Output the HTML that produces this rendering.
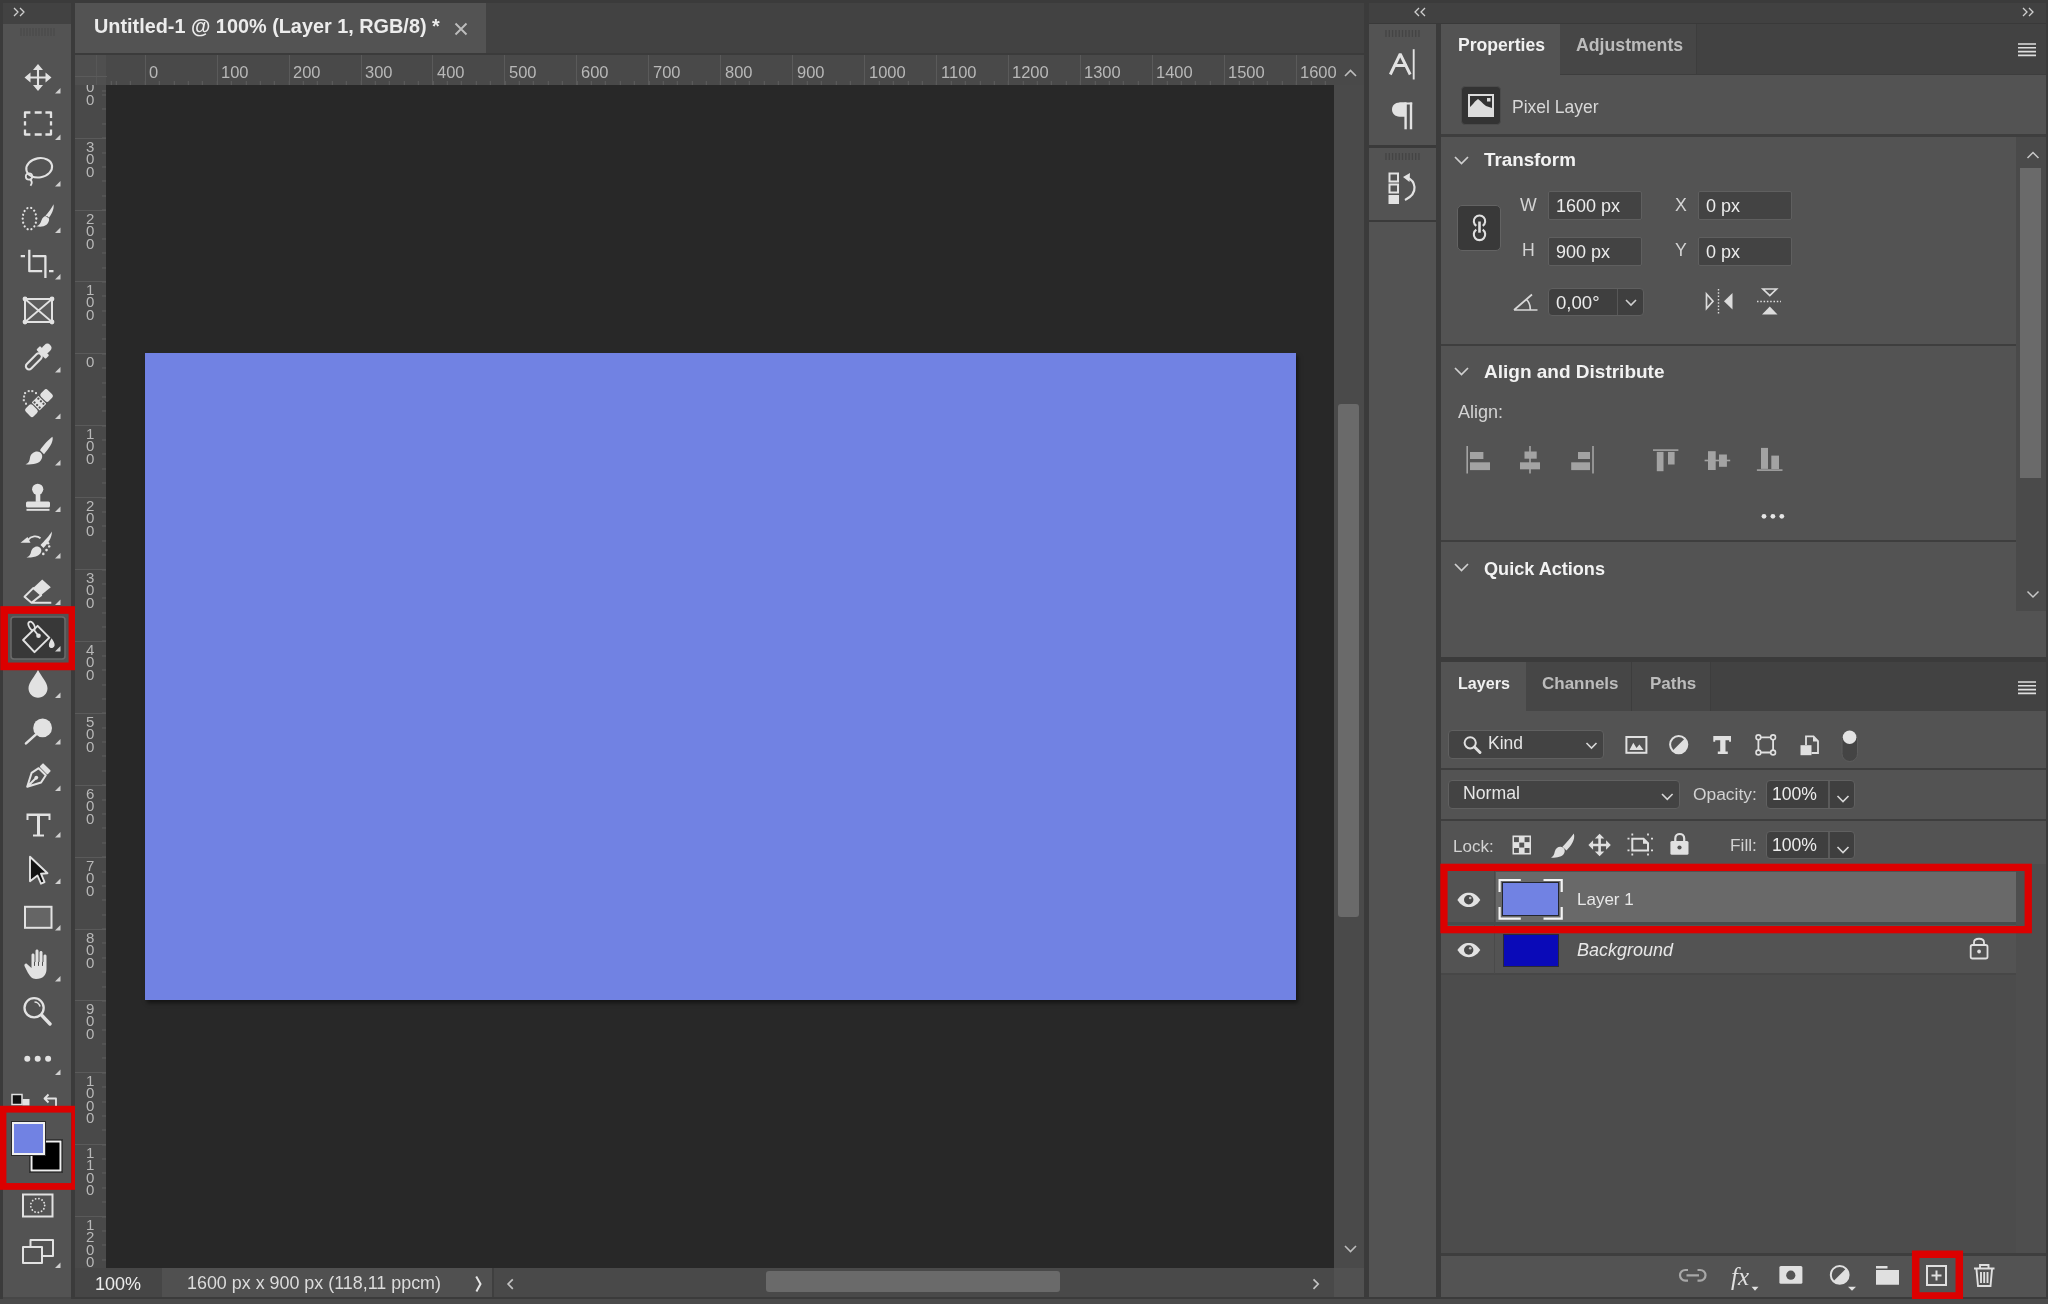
<!DOCTYPE html>
<html><head><meta charset="utf-8">
<style>
*{margin:0;padding:0;box-sizing:border-box}
html,body{width:2048px;height:1304px;overflow:hidden;background:#3b3b3b;font-family:"Liberation Sans",sans-serif;color:#e0e0e0}
.a{position:absolute}
.t{position:absolute;white-space:pre;line-height:1;will-change:transform}
svg{position:absolute;overflow:visible}
.rl{font-size:16.5px;color:#b8b8b8}
.rv{font-size:15px;line-height:12.4px;color:#b8b8b8}
</style></head><body>

<!-- ============ LEFT TOOLBAR ============ -->
<div class="a" style="left:3px;top:3px;width:68px;height:21px;background:#424242"></div>
<div class="a" style="left:3px;top:24px;width:68px;height:1273px;background:#535353"></div>
<div class="a" style="left:3px;top:1297px;width:68px;height:7px;background:#474747"></div>
<!--TOOLBAR-->
<svg class="a" style="left:0;top:0" width="76" height="1304" viewBox="0 0 76 1304">
<defs><style>.ic{fill:none;stroke:#e2e2e2;stroke-width:2.1;stroke-linecap:butt;stroke-linejoin:round}.fl{fill:#e2e2e2}.tri{fill:#d0d0d0}</style></defs>
<!-- header >> -->
<path class="ic" style="stroke-width:1.3;stroke:#cfcfcf" d="M14 8 L18 12 L14 16 M20 8 L24 12 L20 16"/>
<!-- grip -->
<g stroke="#4a4a4a" stroke-width="1.2"><path d="M21 28V36M24 28V36M27 28V36M30 28V36M33 28V36M36 28V36M39 28V36M42 28V36M45 28V36M48 28V36M51 28V36M54 28V36"/></g>
<!-- move -->
<g transform="translate(38,77.5)"><path class="fl" d="M0 -13.5 L5 -7.5 L-5 -7.5Z M0 13.5 L5 7.5 L-5 7.5Z M-13.5 0 L-7.5 -5 L-7.5 5Z M13.5 0 L7.5 -5 L7.5 5Z"/><path class="ic" d="M0 -9V9M-9 0H9"/></g>
<!-- marquee -->
<g transform="translate(38,123.5)"><path class="ic" style="stroke-width:2.3" d="M-13 -5.5V-11H-7.6M-3.3 -11H3.7M7.4 -11H13V-5.5M13 -2.3V2M13 6V11H7.4M3.7 11H-3.3M-7.6 11H-13V6M-13 2V-2.3"/></g>
<!-- lasso -->
<g transform="translate(38,170.7)"><ellipse class="ic" cx="1.2" cy="-2.9" rx="13" ry="9.6" transform="rotate(-10 1.2 -2.9)"/><circle class="ic" style="stroke-width:1.8" cx="-9" cy="5.8" r="3.2"/><path class="ic" style="stroke-width:1.8" d="M-8 8.5C-5 11 -6 13 -7.5 15"/></g>
<!-- quick select -->
<g transform="translate(38,217.3)"><ellipse cx="-8.5" cy="1.3" rx="6.8" ry="11" fill="none" stroke="#e2e2e2" stroke-width="2.2" stroke-linecap="round" stroke-dasharray="0.1 3.9"/><path class="fl" d="M15.5 -13C14 -9.5 10.5 -5 7.5 -1.5L10.5 1C13 -2 16.5 -8 15.5 -13Z M-1.7 9C1 8.5 2.5 6 3.5 3C4.5 0 7 -2 9.5 -1C12 0.5 11.5 5 8.5 7.5C6 9.5 2 9.8 -1.7 9Z"/></g>
<!-- crop -->
<g transform="translate(38,263.9)"><path class="ic" style="stroke-width:2.3" d="M-8.7 -14.2V7.3H4.2M11 7.3H15.5M-17.3 -7.7H-13M-5.5 -7.7H7.4V14.1"/></g>
<!-- frame -->
<g transform="translate(38,310.5)"><rect x="-13" y="-11.5" width="27" height="23" fill="rgba(255,255,255,0.06)" stroke="#e2e2e2" stroke-width="2"/><path class="ic" style="stroke-width:1.8" d="M-13 -11.5L14 11.5M14 -11.5L-13 11.5"/><g class="fl"><circle cx="-13" cy="-11.5" r="2.4"/><circle cx="14" cy="-11.5" r="2.4"/><circle cx="-13" cy="11.5" r="2.4"/><circle cx="14" cy="11.5" r="2.4"/></g></g>
<!-- eyedropper -->
<g transform="translate(35.7,359.5) rotate(45) scale(1.05)"><rect class="fl" x="-3.8" y="-19.5" width="7.6" height="10" rx="3.8"/><rect class="fl" x="-6.2" y="-12" width="12.4" height="5" rx="1"/><rect class="ic" style="stroke-width:2" x="-3" y="-7" width="6" height="19" rx="3"/></g>
<!-- healing -->
<g transform="translate(39,403.1) rotate(-45)"><g class="fl"><rect x="-15.5" y="-5.6" width="9.6" height="11.2" rx="2.5"/><rect x="-4.7" y="-5.6" width="9.4" height="11.2" rx="0.6"/><rect x="5.9" y="-5.6" width="9.6" height="11.2" rx="2.5"/></g><g fill="#535353"><circle cx="-2.7" cy="-3.6" r="1.15"/><circle cx="-2.7" cy="0" r="1.15"/><circle cx="-2.7" cy="3.6" r="1.15"/><circle cx="2.7" cy="-3.6" r="1.15"/><circle cx="2.7" cy="0" r="1.15"/><circle cx="2.7" cy="3.6" r="1.15"/></g></g>
<g transform="translate(38,403.7)" fill="#d6d6d6"><rect x="-13.9" y="-11.6" width="2" height="2"/><rect x="-10.3" y="-13.6" width="2" height="2"/><rect x="-6.7" y="-13.6" width="2" height="2"/><rect x="-3" y="-11.6" width="2" height="2"/><rect x="-14.9" y="-8.2" width="2" height="2"/><rect x="-15.2" y="-4.5" width="2" height="2"/><rect x="-13" y="-1" width="2" height="2"/></g>
<!-- brush -->
<g transform="translate(38,450.3)"><path class="fl" d="M14.5 -13.5C11 -11 5 -5 2 0L6 4C10 -1 16 -8 14.5 -13.5Z M-12.5 14C-9 13 -8.5 10.5 -8 7.5C-7 2.5 -2 0 2 2C5.5 4 5 10 0 12.5C-3.5 14 -8 14.5 -12.5 14Z"/></g>
<!-- stamp -->
<g transform="translate(38,496.9)" class="fl"><circle cx="-0.3" cy="-7.6" r="5.6"/><rect x="-2.3" y="-3" width="4.6" height="8"/><rect x="-12" y="4.5" width="24" height="6" rx="1.5"/><rect x="-11.5" y="12" width="23" height="1.9"/></g>
<!-- history brush -->
<g transform="translate(38,543.5)"><path class="fl" d="M-17.5 -0.8L-10.5 -6.5L-7.5 -0.8Z"/><path class="ic" style="stroke-width:1.8" d="M-10.5 -3.2C-6.5 -7.8 -1 -8.2 2.5 -5.2"/><path class="fl" d="M13.8 -12C12 -8.5 6 -2 2.5 1.5L5.5 4.5C9 1 14.5 -6 13.8 -12Z M-11.5 14C-8.5 13 -7.5 11 -7 8.5C-6 4.5 -2.5 2 1 3.5C4.5 5 4 10 0 12C-3 13.5 -7 14.2 -11.5 14Z"/><g class="fl"><circle cx="10.1" cy="-0.3" r="1.2"/><circle cx="11.2" cy="2.9" r="1.2"/><circle cx="8.5" cy="6.6" r="1.3"/><circle cx="5.3" cy="10.4" r="1.3"/></g></g>
<!-- eraser -->
<g transform="translate(38,590.1)"><path class="fl" d="M4.2 -10.5L12.8 -2.9L3.2 5L-4.8 -2Z"/><path class="ic" style="stroke-width:2" d="M-4.8 -2L3.2 5L-6.5 12.6L-13.5 6.7Z M-6.5 12.6H13.3"/></g>
<!-- paint bucket selected -->
<rect x="11" y="617" width="54" height="42" rx="3" fill="#383838" stroke="#6a6a6a" stroke-width="1.5"/>
<g transform="translate(38,636.7)"><path class="ic" style="stroke-width:2" d="M-0.4 -10.8L11.3 0.9L-3.5 15.4L-14.9 3.3Z"/><ellipse class="ic" style="stroke-width:1.8" cx="-6.4" cy="-10.8" rx="2.6" ry="4.6" transform="rotate(-28 -6.4 -10.8)"/><path class="ic" style="stroke-width:1.8" d="M-4.2 -7L0.3 -1.2"/><circle class="fl" cx="0.5" cy="-1" r="2.3"/><path class="fl" d="M13.5 1.5C16 5 17.5 8 16 10C14.5 12 11.5 11.5 11 9.5C10.5 7 11.5 5 13.5 1.5Z"/></g>
<!-- drop -->
<g transform="translate(38,683.3)"><path class="fl" d="M0 -13.5C3 -7 9.5 -1 9.5 5C9.5 10.5 5 14.5 0 14.5C-5 14.5 -9.5 10.5 -9.5 5C-9.5 -1 -3 -7 0 -13.5Z"/></g>
<!-- dodge -->
<g transform="translate(38,729.9)"><circle class="fl" cx="4.6" cy="-2" r="9.4"/><path class="ic" style="stroke-width:2.6;stroke-linecap:round" d="M-2 4.5L-12 13.5"/></g>
<!-- pen -->
<g transform="translate(37.5,776.5) rotate(45) scale(1.12)"><path class="ic" style="stroke-width:1.8" d="M0 13L-6 1.5L-4.5 -6H4.5L6 1.5Z M0 13V2.5"/><circle class="fl" cx="0" cy="1.5" r="1.7"/><rect class="fl" x="-5" y="-12" width="10" height="4.5" rx="0.8"/></g>
<!-- type -->
<g transform="translate(38,823.1)"><path class="fl" d="M-11.5 -9.5H12.5V-3H10.5V-7H2V11.5H6V13.5H-5V11.5H-1V-7H-9.5V-3H-11.5Z"/></g>
<!-- path select -->
<g transform="translate(38,869.7)"><path d="M-8 -13L9.5 3.5L3 4L6.5 12.5L3 14L-0.5 5.8L-8 11.5Z" fill="#111" stroke="#e2e2e2" stroke-width="1.9" stroke-linejoin="round"/></g>
<!-- rectangle -->
<g transform="translate(38,916.3)"><rect x="-13" y="-9.5" width="26.5" height="21" fill="#656565" stroke="#e2e2e2" stroke-width="2"/></g>
<!-- hand -->
<g transform="translate(38,962.9)"><path class="fl" d="M-2 16C-6 16 -8 13 -10 10L-13.5 3C-14 1.5 -12.5 0 -11 1L-6.5 5V-8C-6.5 -10 -3.5 -10 -3.5 -8V-1H-2.5V-12C-2.5 -14 0.5 -14 0.5 -12V-1H1.5V-10.5C1.5 -12.5 4.5 -12.5 4.5 -10.5V-1H5.5V-7C5.5 -9 8.5 -9 8.5 -7V6C8.5 12 5 16 -2 16Z"/><path d="M-3.5 -1V3M0.5 -1V3M4.5 -1V3" stroke="#535353" stroke-width="1"/></g>
<!-- zoom -->
<g transform="translate(38,1009.5)"><circle class="ic" style="stroke-width:2.3" cx="-3.9" cy="-1.7" r="9.6"/><path class="ic" style="stroke-width:1.6" d="M-3.5 -7.5C-1 -7.5 1.5 -5.5 2 -3"/><path class="ic" style="stroke-width:3.4;stroke-linecap:round" d="M4 6L12 14.5"/></g>
<!-- more -->
<g class="fl"><circle cx="27.3" cy="1058.7" r="3"/><circle cx="37.7" cy="1058.7" r="3"/><circle cx="48.1" cy="1058.7" r="3"/></g>
<!-- triangles -->
<g class="tri">
<path d="M55 93.5H60.5V88Z"/><path d="M55 140H60.5V134.5Z"/><path d="M55 186.5H60.5V181Z"/><path d="M55 233H60.5V227.5Z"/><path d="M55 279.5H60.5V274Z"/>
<path d="M55 372.5H60.5V367Z"/><path d="M55 419H60.5V413.5Z"/><path d="M55 465.5H60.5V460Z"/><path d="M55 512H60.5V506.5Z"/><path d="M55 558.5H60.5V553Z"/><path d="M55 605H60.5V599.5Z"/><path d="M55 651.5H60.5V646Z"/><path d="M55 698H60.5V692.5Z"/><path d="M55 744.5H60.5V739Z"/><path d="M55 791H60.5V785.5Z"/><path d="M55 837.5H60.5V832Z"/><path d="M55 884H60.5V878.5Z"/><path d="M55 930.5H60.5V925Z"/><path d="M55 981.5H60.5V976Z"/><path d="M55 1075H60.5V1069.5Z"/><path d="M55 1268H60.5V1262.5Z"/>
</g>
<!-- default colors & swap -->
<rect x="12" y="1094.5" width="10" height="10" fill="#111" stroke="#e2e2e2" stroke-width="1.5"/>
<rect x="22.5" y="1099" width="7" height="6.5" fill="#e2e2e2"/>
<path class="ic" style="stroke-width:1.8" d="M56 1106V1098.5H45 M48.5 1094.5L44.5 1098.5L48.5 1102.5"/>
<!-- fg/bg -->
<rect x="29.5" y="1139.5" width="33" height="33" fill="#000" stroke="#333" stroke-width="1"/>
<rect x="31.5" y="1141.5" width="29" height="29" fill="#000" stroke="#f0f0f0" stroke-width="2"/>
<rect x="11.5" y="1121.5" width="34" height="34" fill="#7182e3" stroke="#2a2a2a" stroke-width="1"/>
<rect x="13" y="1123" width="31" height="31" fill="#7182e3" stroke="#f0f0f0" stroke-width="2"/>
<!-- quick mask -->
<rect x="23" y="1194.5" width="29.5" height="22" fill="none" stroke="#e2e2e2" stroke-width="2"/>
<circle cx="37.7" cy="1205.5" r="7" fill="none" stroke="#e2e2e2" stroke-width="1.8" stroke-linecap="round" stroke-dasharray="0.1 3.3"/>
<!-- screen mode -->
<path class="ic" style="stroke-width:2" d="M30.5 1247V1240H53V1256H42 M23 1247H42V1263H23Z"/>
<!-- red boxes -->
<rect x="4.15" y="610" width="68.3" height="56.4" fill="none" stroke="#dc0000" stroke-width="7.7"/>
<rect x="3" y="1109.2" width="71.65" height="77.25" fill="none" stroke="#dc0000" stroke-width="6.8"/>
</svg>

<!--/TOOLBAR-->

<!-- ============ DOCUMENT AREA ============ -->
<div class="a" style="left:75px;top:3px;width:1289px;height:50px;background:#424242"></div>
<div class="a" style="left:75px;top:3px;width:411px;height:50px;background:#535353"></div>
<div class="t" style="left:94px;top:17px;font-size:19.85px;font-weight:bold;color:#ececec">Untitled-1 @ 100% (Layer 1, RGB/8) *</div>

<!-- ruler -->
<div class="a" style="left:75px;top:55px;width:1289px;height:30px;background:#494949"></div>
<div class="a" style="left:75px;top:85px;width:31px;height:1183px;background:#494949"></div>
<!--RULER-->
<div class="a" style="left:106px;top:55px;width:1258px;height:30px;overflow:hidden">
<div class="a" style="left:0;top:26px;width:1228px;height:4px;background:repeating-linear-gradient(90deg,#5e5e5e 0,#5e5e5e 1px,transparent 1px,transparent 14.392px);background-position:9.82px 0"></div>
<div class="a" style="left:-33.4px;top:0;width:1px;height:30px;background:#5a5a5a"></div>
<div class="a" style="left:38.6px;top:0;width:1px;height:30px;background:#5a5a5a"></div>
<div class="t rl" style="left:42.9px;top:9px">0</div>
<div class="a" style="left:110.6px;top:0;width:1px;height:30px;background:#5a5a5a"></div>
<div class="t rl" style="left:114.9px;top:9px">100</div>
<div class="a" style="left:182.5px;top:0;width:1px;height:30px;background:#5a5a5a"></div>
<div class="t rl" style="left:186.8px;top:9px">200</div>
<div class="a" style="left:254.5px;top:0;width:1px;height:30px;background:#5a5a5a"></div>
<div class="t rl" style="left:258.8px;top:9px">300</div>
<div class="a" style="left:326.4px;top:0;width:1px;height:30px;background:#5a5a5a"></div>
<div class="t rl" style="left:330.7px;top:9px">400</div>
<div class="a" style="left:398.4px;top:0;width:1px;height:30px;background:#5a5a5a"></div>
<div class="t rl" style="left:402.7px;top:9px">500</div>
<div class="a" style="left:470.4px;top:0;width:1px;height:30px;background:#5a5a5a"></div>
<div class="t rl" style="left:474.7px;top:9px">600</div>
<div class="a" style="left:542.3px;top:0;width:1px;height:30px;background:#5a5a5a"></div>
<div class="t rl" style="left:546.6px;top:9px">700</div>
<div class="a" style="left:614.3px;top:0;width:1px;height:30px;background:#5a5a5a"></div>
<div class="t rl" style="left:618.6px;top:9px">800</div>
<div class="a" style="left:686.2px;top:0;width:1px;height:30px;background:#5a5a5a"></div>
<div class="t rl" style="left:690.5px;top:9px">900</div>
<div class="a" style="left:758.2px;top:0;width:1px;height:30px;background:#5a5a5a"></div>
<div class="t rl" style="left:762.5px;top:9px">1000</div>
<div class="a" style="left:830.2px;top:0;width:1px;height:30px;background:#5a5a5a"></div>
<div class="t rl" style="left:834.5px;top:9px">1100</div>
<div class="a" style="left:902.1px;top:0;width:1px;height:30px;background:#5a5a5a"></div>
<div class="t rl" style="left:906.4px;top:9px">1200</div>
<div class="a" style="left:974.1px;top:0;width:1px;height:30px;background:#5a5a5a"></div>
<div class="t rl" style="left:978.4px;top:9px">1300</div>
<div class="a" style="left:1046.0px;top:0;width:1px;height:30px;background:#5a5a5a"></div>
<div class="t rl" style="left:1050.3px;top:9px">1400</div>
<div class="a" style="left:1118.0px;top:0;width:1px;height:30px;background:#5a5a5a"></div>
<div class="t rl" style="left:1122.3px;top:9px">1500</div>
<div class="a" style="left:1190.0px;top:0;width:1px;height:30px;background:#5a5a5a"></div>
<div class="t rl" style="left:1194.3px;top:9px">1600</div>
</div>
<div class="a" style="left:75px;top:85px;width:31px;height:1183px;overflow:hidden">
<div class="a" style="left:27px;top:0;width:4px;height:1183px;background:repeating-linear-gradient(180deg,#5e5e5e 0,#5e5e5e 1px,transparent 1px,transparent 14.380px);background-position:0 9.46px"></div>
<div class="a" style="left:0;top:-19.3px;width:31px;height:1px;background:#5a5a5a"></div>
<div class="t rv" style="left:11.3px;top:-16.3px">4<br>0<br>0</div>
<div class="a" style="left:0;top:52.6px;width:31px;height:1px;background:#5a5a5a"></div>
<div class="t rv" style="left:11.3px;top:55.6px">3<br>0<br>0</div>
<div class="a" style="left:0;top:124.5px;width:31px;height:1px;background:#5a5a5a"></div>
<div class="t rv" style="left:11.3px;top:127.5px">2<br>0<br>0</div>
<div class="a" style="left:0;top:196.4px;width:31px;height:1px;background:#5a5a5a"></div>
<div class="t rv" style="left:11.3px;top:199.4px">1<br>0<br>0</div>
<div class="a" style="left:0;top:268.3px;width:31px;height:1px;background:#5a5a5a"></div>
<div class="t rv" style="left:11.3px;top:271.3px">0</div>
<div class="a" style="left:0;top:340.2px;width:31px;height:1px;background:#5a5a5a"></div>
<div class="t rv" style="left:11.3px;top:343.2px">1<br>0<br>0</div>
<div class="a" style="left:0;top:412.1px;width:31px;height:1px;background:#5a5a5a"></div>
<div class="t rv" style="left:11.3px;top:415.1px">2<br>0<br>0</div>
<div class="a" style="left:0;top:484.0px;width:31px;height:1px;background:#5a5a5a"></div>
<div class="t rv" style="left:11.3px;top:487.0px">3<br>0<br>0</div>
<div class="a" style="left:0;top:555.9px;width:31px;height:1px;background:#5a5a5a"></div>
<div class="t rv" style="left:11.3px;top:558.9px">4<br>0<br>0</div>
<div class="a" style="left:0;top:627.8px;width:31px;height:1px;background:#5a5a5a"></div>
<div class="t rv" style="left:11.3px;top:630.8px">5<br>0<br>0</div>
<div class="a" style="left:0;top:699.7px;width:31px;height:1px;background:#5a5a5a"></div>
<div class="t rv" style="left:11.3px;top:702.7px">6<br>0<br>0</div>
<div class="a" style="left:0;top:771.6px;width:31px;height:1px;background:#5a5a5a"></div>
<div class="t rv" style="left:11.3px;top:774.6px">7<br>0<br>0</div>
<div class="a" style="left:0;top:843.5px;width:31px;height:1px;background:#5a5a5a"></div>
<div class="t rv" style="left:11.3px;top:846.5px">8<br>0<br>0</div>
<div class="a" style="left:0;top:915.4px;width:31px;height:1px;background:#5a5a5a"></div>
<div class="t rv" style="left:11.3px;top:918.4px">9<br>0<br>0</div>
<div class="a" style="left:0;top:987.3px;width:31px;height:1px;background:#5a5a5a"></div>
<div class="t rv" style="left:11.3px;top:990.3px">1<br>0<br>0<br>0</div>
<div class="a" style="left:0;top:1059.2px;width:31px;height:1px;background:#5a5a5a"></div>
<div class="t rv" style="left:11.3px;top:1062.2px">1<br>1<br>0<br>0</div>
<div class="a" style="left:0;top:1131.1px;width:31px;height:1px;background:#5a5a5a"></div>
<div class="t rv" style="left:11.3px;top:1134.1px">1<br>2<br>0<br>0</div>
</div>
<div class="a" style="left:75px;top:55px;width:31px;height:30px;background:#4f4f4f"></div>
<div class="a" style="left:96px;top:55px;width:1px;height:30px;background:#575757"></div>
<div class="a" style="left:75px;top:75.5px;width:32px;height:1px;background:#5b5b5b"></div>
<!--/RULER-->
<!-- canvas -->
<div class="a" style="left:106px;top:85px;width:1228px;height:1183px;background:#282828"></div>
<div class="a" style="left:145px;top:353px;width:1151px;height:647px;background:#7182e3;box-shadow:2px 3px 4px rgba(0,0,0,0.5)"></div>
<!-- v scroll -->
<div class="a" style="left:1334px;top:85px;width:30px;height:1183px;background:#4a4a4a"></div>
<div class="a" style="left:1338px;top:404px;width:21px;height:513px;background:#6a6a6a;border-radius:3px"></div>

<!-- status bar -->
<div class="a" style="left:75px;top:1268px;width:1289px;height:29px;background:#494949"></div>
<div class="a" style="left:75px;top:1268px;width:87px;height:29px;background:#464646"></div>
<div class="a" style="left:162px;top:1268px;width:330px;height:29px;background:#505050"></div>
<div class="a" style="left:1334px;top:1268px;width:30px;height:29px;background:#515151"></div>
<div class="a" style="left:766px;top:1271px;width:294px;height:21px;background:#6a6a6a;border-radius:3px"></div>
<div class="t" style="left:95px;top:1274.5px;font-size:18px;color:#ececec">100%</div>
<div class="t" style="left:187px;top:1275px;font-size:17.9px;color:#dcdcdc">1600 px x 900 px (118,11 ppcm)</div>

<!--DOCX-->
<svg class="a" style="left:0;top:0" width="1370" height="1304" viewBox="0 0 1370 1304">
<path d="M455.5 23.5L466.5 34.5M466.5 23.5L455.5 34.5" stroke="#bdbdbd" stroke-width="1.9"/>
<path d="M1345 76L1350.5 70.5L1356 76" fill="none" stroke="#bdbdbd" stroke-width="1.6"/>
<path d="M1345 1246L1350.5 1251.5L1356 1246" fill="none" stroke="#bdbdbd" stroke-width="1.6"/>
<rect x="492" y="1268" width="2" height="29" fill="#3f3f3f"/>
<path d="M476.2 1276.6L480.5 1284L476.4 1291.5" fill="none" stroke="#e6e6e6" stroke-width="2"/>
<path d="M512.8 1279.3L508.1 1284L512.8 1288.8" fill="none" stroke="#c4c4c4" stroke-width="1.7"/>
<path d="M1313.5 1279.3L1318.2 1284L1313.5 1288.8" fill="none" stroke="#c4c4c4" stroke-width="1.7"/>
</svg>

<!--/DOCX-->
<!-- ============ MIDDLE DOCK ============ -->
<div class="a" style="left:1369px;top:2.5px;width:677px;height:21px;background:#414141"></div>
<div class="a" style="left:1369px;top:23px;width:677px;height:1px;background:#393939"></div>
<div class="a" style="left:1369px;top:24px;width:67px;height:1273px;background:#535353"></div>
<div class="a" style="left:1369px;top:145px;width:67px;height:3px;background:#3a3a3a"></div>
<div class="a" style="left:1369px;top:220px;width:67px;height:2px;background:#3a3a3a"></div>

<!-- ============ RIGHT DOCK ============ -->

<!-- properties tabs -->
<div class="a" style="left:1441px;top:24px;width:605px;height:50px;background:#424242"></div>
<div class="a" style="left:1441px;top:24px;width:119px;height:50px;background:#535353"></div>
<div class="a" style="left:1560px;top:24px;width:137px;height:50px;background:#464646;border-right:1px solid #3d3d3d"></div>
<div class="t" style="left:1458px;top:37px;font-size:17.6px;font-weight:bold;color:#f0f0f0">Properties</div>
<div class="t" style="left:1576px;top:37px;font-size:17.7px;font-weight:bold;color:#bcbcbc">Adjustments</div>
<div class="a" style="left:1441px;top:74px;width:605px;height:583px;background:#535353"></div>
<div class="a" style="left:1560px;top:73.5px;width:486px;height:1px;background:#3d3d3d"></div>
<!--PROPS-->
<div class="a" style="left:2016px;top:137px;width:30px;height:474px;background:#4a4a4a"></div>
<div class="a" style="left:2020px;top:167.5px;width:21px;height:310px;background:#6a6a6a"></div>
<div class="a" style="left:1441px;top:134px;width:605px;height:2.5px;background:#3e3e3e"></div>
<div class="a" style="left:1441px;top:343.5px;width:575px;height:2.5px;background:#3e3e3e"></div>
<div class="a" style="left:1441px;top:539.5px;width:575px;height:2.5px;background:#3e3e3e"></div>
<!-- pixel layer icon -->
<div class="a" style="left:1461px;top:86px;width:40px;height:39px;background:#333;border:1px solid #4b4b4b;border-radius:4px"></div>
<div class="t" style="left:1512px;top:98.6px;font-size:17.5px;color:#d8d8d8">Pixel Layer</div>
<div class="t" style="left:1484px;top:151.2px;font-size:18.8px;font-weight:bold;color:#f2f2f2">Transform</div>
<div class="t" style="left:1484px;top:361.5px;font-size:19px;font-weight:bold;color:#f2f2f2">Align and Distribute</div>
<div class="t" style="left:1484px;top:559.8px;font-size:18.1px;font-weight:bold;color:#f2f2f2">Quick Actions</div>
<div class="t" style="left:1458px;top:402.5px;font-size:18px;color:#d4d4d4">Align:</div>
<!-- link button -->
<div class="a" style="left:1457px;top:205px;width:44px;height:46px;background:#393939;border:1.5px solid #636363;border-radius:5px"></div>
<!-- inputs -->
<div class="a" style="left:1548px;top:191px;width:94px;height:29px;background:#434343;border:1px solid #5f5f5f;border-radius:2px"></div>
<div class="a" style="left:1698px;top:191px;width:94px;height:29px;background:#434343;border:1px solid #5f5f5f;border-radius:2px"></div>
<div class="a" style="left:1548px;top:236.5px;width:94px;height:29px;background:#434343;border:1px solid #5f5f5f;border-radius:2px"></div>
<div class="a" style="left:1698px;top:236.5px;width:94px;height:29px;background:#434343;border:1px solid #5f5f5f;border-radius:2px"></div>
<div class="a" style="left:1548px;top:288px;width:96px;height:28px;background:#3f3f3f;border:1px solid #5f5f5f;border-radius:4px"></div>
<div class="a" style="left:1616.5px;top:289px;width:1.5px;height:26px;background:#575757"></div>
<div class="t" style="left:1519.5px;top:196.5px;font-size:17.7px;color:#d4d4d4">W</div>
<div class="t" style="left:1521.5px;top:242px;font-size:17.7px;color:#d4d4d4">H</div>
<div class="t" style="left:1674.5px;top:196.5px;font-size:17.7px;color:#d4d4d4">X</div>
<div class="t" style="left:1675px;top:242px;font-size:17.7px;color:#d4d4d4">Y</div>
<div class="t" style="left:1556px;top:197.4px;font-size:18px;color:#ececec">1600 px</div>
<div class="t" style="left:1706px;top:197.4px;font-size:18px;color:#ececec">0 px</div>
<div class="t" style="left:1556px;top:242.5px;font-size:18px;color:#ececec">900 px</div>
<div class="t" style="left:1706px;top:242.5px;font-size:18px;color:#ececec">0 px</div>
<div class="t" style="left:1556px;top:294.2px;font-size:18.6px;color:#ececec">0,00°</div>
<svg class="a" style="left:0;top:0" width="2048" height="700" viewBox="0 0 2048 700">
<!-- dock header arrows -->
<path d="M1419 8L1415 12L1419 16M1425 8L1421 12L1425 16" fill="none" stroke="#cfcfcf" stroke-width="1.3"/>
<path d="M2023 8L2027 12L2023 16M2029 8L2033 12L2029 16" fill="none" stroke="#cfcfcf" stroke-width="1.3"/>
<!-- hamburger -->
<path d="M2018 44H2036M2018 47.8H2036M2018 51.6H2036M2018 55.4H2036" stroke="#dedede" stroke-width="1.6"/>
<!-- scroll arrows -->
<path d="M2027.5 158L2033 152.5L2038.5 158" fill="none" stroke="#c8c8c8" stroke-width="1.5"/>
<path d="M2027.5 591.5L2033 597L2038.5 591.5" fill="none" stroke="#c8c8c8" stroke-width="1.5"/>
<!-- pixel layer image icon -->
<rect x="1469" y="95" width="24" height="21" fill="none" stroke="#dcdcdc" stroke-width="2"/>
<path d="M1470 115V107L1473 104L1475 101.5L1478 99L1481 101.5L1483.5 104L1486 106L1492 108V115Z" fill="#dcdcdc"/>
<rect x="1487" y="98" width="3.5" height="3.5" fill="#dcdcdc"/>
<!-- chevrons -->
<path d="M1455 157L1461.5 163.5L1468 157" fill="none" stroke="#d0d0d0" stroke-width="1.7"/>
<path d="M1455 368L1461.5 374.5L1468 368" fill="none" stroke="#d0d0d0" stroke-width="1.7"/>
<path d="M1455 564L1461.5 570.5L1468 564" fill="none" stroke="#d0d0d0" stroke-width="1.7"/>
<!-- chain -->
<path d="M1476.3 225.9A5.7 5.7 0 1 1 1482.7 225.9M1476.3 229.7A5.7 5.7 0 1 0 1482.7 229.7" fill="none" stroke="#e0e0e0" stroke-width="2.1"/>
<rect x="1478.2" y="221.5" width="2.6" height="11.2" fill="#e0e0e0"/>
<!-- angle dropdown chevron -->
<path d="M1626 300L1631 305L1636 300" fill="none" stroke="#d0d0d0" stroke-width="1.6"/>
<!-- angle icon -->
<path d="M1514 310H1537.5M1514 310L1532 294.5M1526.5 299.5C1529 302 1530.5 306 1530.2 310" fill="none" stroke="#d8d8d8" stroke-width="1.7"/>
<!-- flip h -->
<path d="M1706.5 294L1713 301.2L1706.5 308.5Z" fill="none" stroke="#dcdcdc" stroke-width="1.7"/>
<path d="M1718.5 289V314" stroke="#dcdcdc" stroke-width="1.4" stroke-dasharray="1.5 1.8"/>
<path d="M1732.5 293L1724 301.2L1732.5 309.5Z" fill="#dcdcdc"/>
<!-- flip v -->
<path d="M1763 289H1776.5L1769.8 295.5Z" fill="none" stroke="#dcdcdc" stroke-width="1.7"/>
<path d="M1757 301.5H1781" stroke="#dcdcdc" stroke-width="1.4" stroke-dasharray="1.5 1.8"/>
<path d="M1762 314.5H1777.5L1769.8 306.5Z" fill="#dcdcdc"/>
<!-- align icons -->
<g fill="#a3a3a3">
<rect x="1466.4" y="446" width="1.6" height="27.5"/><rect x="1470" y="452" width="13.4" height="7"/><rect x="1470" y="462.3" width="20" height="7.8"/>
<rect x="1529.2" y="446" width="1.6" height="27.5"/><rect x="1524.5" y="451.5" width="12.2" height="7.2"/><rect x="1520" y="462.3" width="20" height="7"/>
<rect x="1592.2" y="446" width="1.6" height="27.5"/><rect x="1578" y="452" width="12" height="7"/><rect x="1571.2" y="462.3" width="18.8" height="7.8"/>
<rect x="1653" y="449.3" width="25.4" height="1.6"/><rect x="1656.8" y="451.9" width="6.7" height="19.3"/><rect x="1668" y="451.9" width="6.6" height="12.6"/>
<rect x="1704.6" y="459.7" width="25.6" height="1.6"/><rect x="1708" y="451.2" width="7.7" height="18.8"/><rect x="1719" y="454.5" width="7.9" height="12.3"/>
<rect x="1756.9" y="469.3" width="25.6" height="1.6"/><rect x="1761" y="447.9" width="7" height="21"/><rect x="1771.3" y="455.6" width="7.7" height="13.4"/>
</g>
<g fill="#e6e6e6"><circle cx="1764" cy="516.3" r="2.4"/><circle cx="1772.9" cy="516.3" r="2.4"/><circle cx="1781.8" cy="516.3" r="2.4"/></g>
<!-- middle dock -->
<g stroke="#444" stroke-width="1.3"><path d="M1386 30V37M1389.3 30V37M1392.6 30V37M1395.9 30V37M1399.2 30V37M1402.5 30V37M1405.8 30V37M1409.1 30V37M1412.4 30V37M1415.7 30V37M1419 30V37"/>
<path d="M1386 153V160M1389.3 153V160M1392.6 153V160M1395.9 153V160M1399.2 153V160M1402.5 153V160M1405.8 153V160M1409.1 153V160M1412.4 153V160M1415.7 153V160M1419 153V160"/></g>
<path d="M1390.3 74.5L1398.3 54H1402.1L1410.2 74.5Z M1394.5 67.2H1406.1V64.6H1394.5Z" fill="none" stroke="none"/><path d="M1390.3 74.5L1400.2 54L1410.2 74.5M1393.5 65.5H1407" fill="none" stroke="#e2e2e2" stroke-width="2.9" stroke-linejoin="bevel"/>
<path d="M1413.7 49.2V79.5" stroke="#e2e2e2" stroke-width="1.9"/>
<path d="M1406 102.5H1399.5C1395 102.5 1392 105.5 1392 109.6C1392 113.7 1395 116.7 1399.5 116.7H1406Z" fill="#e2e2e2"/><rect x="1404.4" y="102.5" width="2.4" height="26.8" fill="#e2e2e2"/><rect x="1409.8" y="102.5" width="2.4" height="26.8" fill="#e2e2e2"/><rect x="1399.5" y="102.5" width="12.7" height="2" fill="#e2e2e2"/>
<rect x="1389.5" y="173.5" width="8.5" height="8" fill="none" stroke="#e2e2e2" stroke-width="2"/>
<rect x="1389.5" y="184.5" width="8.5" height="8" fill="none" stroke="#e2e2e2" stroke-width="2"/>
<rect x="1388.5" y="195" width="10.5" height="9" fill="#e2e2e2"/>
<path d="M1405 200C1411 197 1415 193 1414.5 187C1414 182 1411 179 1407 177.5" fill="none" stroke="#e2e2e2" stroke-width="2.2"/>
<path d="M1403 177L1410 173L1409.5 182Z" fill="#e2e2e2"/>
</svg>

<!--/PROPS-->

<!-- layers -->
<div class="a" style="left:1441px;top:662px;width:605px;height:49px;background:#424242"></div>
<div class="a" style="left:1441px;top:662px;width:85px;height:49px;background:#535353"></div>
<div class="a" style="left:1526px;top:662px;width:106px;height:49px;background:#464646;border-right:1px solid #3d3d3d"></div>
<div class="a" style="left:1632px;top:662px;width:79px;height:49px;background:#464646;border-right:1px solid #3d3d3d"></div>
<div class="t" style="left:1458px;top:675px;font-size:16.1px;font-weight:bold;color:#f0f0f0">Layers</div>
<div class="t" style="left:1542px;top:675px;font-size:17px;font-weight:bold;color:#bcbcbc">Channels</div>
<div class="t" style="left:1650px;top:675px;font-size:17px;font-weight:bold;color:#bcbcbc">Paths</div>
<div class="a" style="left:1441px;top:711px;width:605px;height:586px;background:#535353"></div>
<!--LAYERS-->
<div class="a" style="left:1441px;top:767.5px;width:605px;height:2.5px;background:#3e3e3e"></div>
<div class="a" style="left:1441px;top:818.5px;width:605px;height:2.5px;background:#3e3e3e"></div>
<!-- kind dropdown -->
<div class="a" style="left:1447.5px;top:730px;width:156px;height:29px;background:#434343;border:1px solid #606060;border-radius:4px"></div>
<div class="t" style="left:1488px;top:735.1px;font-size:17.5px;color:#e6e6e6">Kind</div>
<!-- normal dropdown -->
<div class="a" style="left:1447.5px;top:780px;width:232px;height:29px;background:#434343;border:1px solid #606060;border-radius:4px"></div>
<div class="t" style="left:1463px;top:785.4px;font-size:17.7px;color:#e6e6e6">Normal</div>
<div class="t" style="left:1693px;top:785.7px;font-size:17.4px;color:#d2d2d2">Opacity:</div>
<div class="a" style="left:1766px;top:780px;width:89px;height:29px;background:#3f3f3f;border:1px solid #606060;border-radius:4px"></div>
<div class="a" style="left:1828.2px;top:781px;width:1.5px;height:27px;background:#5a5a5a"></div>
<div class="t" style="left:1772px;top:785.5px;font-size:17.6px;color:#ececec">100%</div>
<div class="t" style="left:1453px;top:837.6px;font-size:17px;color:#d2d2d2">Lock:</div>
<div class="t" style="left:1730px;top:837.4px;font-size:17.3px;color:#d2d2d2">Fill:</div>
<div class="a" style="left:1766px;top:831px;width:89px;height:28px;background:#3f3f3f;border:1px solid #606060;border-radius:4px"></div>
<div class="a" style="left:1828.2px;top:832px;width:1.5px;height:26px;background:#5a5a5a"></div>
<div class="t" style="left:1772px;top:837.4px;font-size:17.6px;color:#ececec">100%</div>
<!-- rows -->
<div class="a" style="left:1496px;top:872px;width:520px;height:50px;background:#696969"></div>
<div class="a" style="left:1441px;top:922px;width:575px;height:2.5px;background:#474c4c"></div>
<div class="a" style="left:1441px;top:973px;width:575px;height:1.5px;background:#474747"></div>
<div class="a" style="left:1494.3px;top:864px;width:1.2px;height:110px;background:#4a4a4a"></div>
<div class="a" style="left:1441px;top:974.5px;width:575px;height:278.5px;background:#4c4c4c"></div>
<div class="a" style="left:2016px;top:864px;width:30px;height:389px;background:#4e4e4e"></div>
<div class="t" style="left:1577px;top:891.3px;font-size:17px;color:#e8e8e8">Layer 1</div>
<div class="t" style="left:1577px;top:941px;font-size:18px;font-style:italic;color:#e8e8e8">Background</div>
<div class="a" style="left:1502.2px;top:882.2px;width:56.8px;height:34px;background:#7182e3;border:1.5px solid #23262e"></div>
<div class="a" style="left:1502.5px;top:933.5px;width:56.5px;height:33px;background:#0a0ab8;border:1px solid #2a2a36"></div>
<div class="a" style="left:1441px;top:1253px;width:605px;height:2.5px;background:#3e3e3e"></div>
<svg class="a" style="left:0;top:0" width="2048" height="1304" viewBox="0 0 2048 1304">
<path d="M2018 682H2036M2018 685.8H2036M2018 689.6H2036M2018 693.4H2036" stroke="#dedede" stroke-width="1.6"/>
<!-- search -->
<circle cx="1470.2" cy="742.8" r="5.6" fill="none" stroke="#e0e0e0" stroke-width="2"/>
<path d="M1474.5 747L1480 752.5" stroke="#e0e0e0" stroke-width="3" stroke-linecap="round"/>
<path d="M1586.5 743L1591.5 748L1596.5 743" fill="none" stroke="#d8d8d8" stroke-width="1.6"/>
<path d="M1662 794L1667.3 799.3L1672.6 794" fill="none" stroke="#d8d8d8" stroke-width="1.6"/>
<path d="M1837.5 796L1843 801.5L1848.5 796" fill="none" stroke="#d8d8d8" stroke-width="1.6"/>
<path d="M1837.5 847L1843 852.5L1848.5 847" fill="none" stroke="#d8d8d8" stroke-width="1.6"/>
<!-- filter icons -->
<rect x="1626.4" y="737" width="20" height="15.8" fill="none" stroke="#e0e0e0" stroke-width="2"/>
<path d="M1629.5 750L1633.3 742.8L1636.5 748L1639.4 744.5L1643.5 750Z" fill="#e0e0e0"/>
<circle cx="1678.7" cy="744.6" r="8.6" fill="none" stroke="#e0e0e0" stroke-width="2"/>
<path d="M1684.8 738.5A8.6 8.6 0 0 1 1672.6 750.7Z" fill="#e0e0e0"/>
<path d="M1713.3 736H1731V741.8H1729.1V740.3H1725.5V751.6H1727.8V754H1717.8V751.6H1720.2V740.3H1715.2V741.8H1713.3Z" fill="#e0e0e0"/>
<path d="M1760.9 737.3H1770.6M1760.9 752.5H1770.6M1758.4 739.8V750M1773.1 739.8V750" stroke="#e0e0e0" stroke-width="1.8"/>
<g fill="none" stroke="#e0e0e0" stroke-width="1.6"><circle cx="1758.4" cy="737.3" r="2.4"/><circle cx="1773.1" cy="737.3" r="2.4"/><circle cx="1758.4" cy="752.5" r="2.4"/><circle cx="1773.1" cy="752.5" r="2.4"/></g>
<path d="M1806 745V736.4H1813.5L1818 741V753H1811.5" fill="none" stroke="#e0e0e0" stroke-width="1.8"/>
<path d="M1813 736.5V741.5H1818Z" fill="#e0e0e0"/>
<rect x="1800.5" y="745.2" width="11" height="10" fill="#e0e0e0"/>
<rect x="1842" y="731" width="15.5" height="30.5" rx="7.75" fill="#444" stroke="#5c5c5c" stroke-width="1"/>
<circle cx="1849.6" cy="737.2" r="6.8" fill="#e4e4e4"/>
<!-- lock icons -->
<rect x="1512.5" y="835.5" width="18.5" height="19" fill="#e0e0e0"/>
<g fill="#535353"><rect x="1514" y="837.2" width="4.9" height="4.9"/><rect x="1524.6" y="837.2" width="4.9" height="4.9"/><rect x="1519.3" y="842.6" width="4.9" height="4.9"/><rect x="1514" y="848" width="4.9" height="4.9"/><rect x="1524.6" y="848" width="4.9" height="4.9"/></g>
<path d="M1573.8 833.5C1571 837.5 1566 843 1562.5 846.8L1566.5 850.5C1570.5 846.5 1575.8 839.5 1573.8 833.5Z M1551 857.5C1553.5 856.5 1554.2 854.5 1554.8 851.5C1555.8 847.5 1559.8 845.5 1563 847.5C1566 849.5 1565 854.5 1561 856.3C1558 857.6 1554.5 858 1551 857.5Z" fill="#e0e0e0"/>
<path d="M1599.6 833.8L1604.3 838.5H1594.9Z M1599.6 856.3L1604.3 851.6H1594.9Z M1588.4 845L1593.1 840.3V849.7Z M1610.8 845L1606.1 840.3V849.7Z" fill="#e0e0e0"/>
<path d="M1599.6 837V853M1591.5 845H1607.7" stroke="#e0e0e0" stroke-width="2.6"/>
<path d="M1632.3 838.7H1643.5L1648 843.2V850.4H1632.3Z" fill="none" stroke="#e0e0e0" stroke-width="2"/>
<path d="M1643 838.7V843.7H1648Z" fill="#e0e0e0"/>
<path d="M1632.3 833.5V835.5M1627.5 838.7H1629.5M1648 833.5V835.5M1651 838.7H1653M1627.5 850.4H1629.5M1632.3 853.5V855.5M1651 850.4H1653M1648 853.5V855.5" stroke="#e0e0e0" stroke-width="1.8"/>
<path d="M1675.3 842V838.5C1675.3 832.5 1684.2 832.5 1684.2 838.5V842" fill="none" stroke="#e0e0e0" stroke-width="2.2"/>
<rect x="1670.4" y="841.1" width="18.1" height="13.7" rx="1.5" fill="#e0e0e0"/>
<circle cx="1679.5" cy="847.5" r="2.1" fill="#535353"/>
<!-- eyes -->
<g id="eye"><path d="M1457.4 899.9C1461 894.5 1464.5 892.8 1468.8 892.8C1473.1 892.8 1476.6 894.5 1480.3 899.9C1476.6 905.3 1473.1 907 1468.8 907C1464.5 907 1461 905.3 1457.4 899.9Z" fill="#e2e2e2"/><circle cx="1468.7" cy="899.8" r="4.7" fill="#4a4a4a"/><circle cx="1470.2" cy="898" r="1.3" fill="#bdbdbd"/></g>
<use href="#eye" transform="translate(0,50.2)"/>
<!-- thumb brackets -->
<path d="M1499.6 892V880H1520.8M1543.5 880H1561.7V892M1499.6 907V918.7H1520.8M1543.5 918.7H1561.7V907" fill="none" stroke="#f4f4f4" stroke-width="2.2"/>
<!-- bg lock -->
<path d="M1974 945V942.5C1974 937.5 1984 937.5 1984 942.5V945" fill="none" stroke="#e0e0e0" stroke-width="1.8"/>
<rect x="1970.7" y="945" width="16.8" height="13.5" rx="1.8" fill="none" stroke="#e0e0e0" stroke-width="1.8"/>
<circle cx="1979.1" cy="951.5" r="1.9" fill="#e0e0e0"/>
<!-- bottom icons -->
<g fill="none" stroke="#a8a8a8" stroke-width="2.2"><path d="M1688 1270H1685.3A5.3 5.3 0 0 0 1685.3 1280.6H1688M1697.5 1270H1700.2A5.3 5.3 0 0 1 1700.2 1280.6H1697.5M1686.5 1275.3H1699"/></g>
<text x="1731" y="1285" font-family="Liberation Serif" font-style="italic" font-size="25" fill="#e0e0e0">fx</text>
<path d="M1751.6 1286.8H1758.5L1755 1290.8Z M1848 1286.8H1856L1852 1290.8Z" fill="#e0e0e0"/>
<rect x="1779.4" y="1265.9" width="23" height="17.9" rx="1.5" fill="#e0e0e0"/>
<circle cx="1790.8" cy="1275.2" r="4.6" fill="#535353"/>
<circle cx="1839.7" cy="1274.9" r="8.9" fill="none" stroke="#e0e0e0" stroke-width="2"/>
<path d="M1846 1268.6A8.9 8.9 0 0 1 1833.4 1281.2Z" fill="#e0e0e0"/>
<path d="M1876 1268.5H1887.5V1265.9H1876Z M1876 1270H1899V1284.8H1876Z" fill="#e0e0e0"/>
<rect x="1927" y="1266" width="19" height="19" fill="none" stroke="#e0e0e0" stroke-width="2"/>
<path d="M1936.5 1270.5V1280.5M1931.5 1275.5H1941.5" stroke="#e0e0e0" stroke-width="2"/>
<path d="M1974 1268.5H1994.5M1980 1268.5V1265H1988.5V1268.5M1976.5 1269.5L1978 1286H1990.5L1992 1269.5M1981 1272V1283M1984.2 1272V1283M1987.5 1272V1283" fill="none" stroke="#e0e0e0" stroke-width="1.9"/>
<!-- red boxes -->
<rect x="1443.95" y="867.35" width="584.3" height="62.3" fill="none" stroke="#dc0000" stroke-width="7.3"/>
<rect x="1915.7" y="1254.25" width="43.6" height="41.7" fill="none" stroke="#dc0000" stroke-width="7.5"/>
</svg>

<!--/LAYERS-->

<div class="a" style="left:0;top:1298.5px;width:2048px;height:6px;background:#4b4b4b"></div>
</body></html>
